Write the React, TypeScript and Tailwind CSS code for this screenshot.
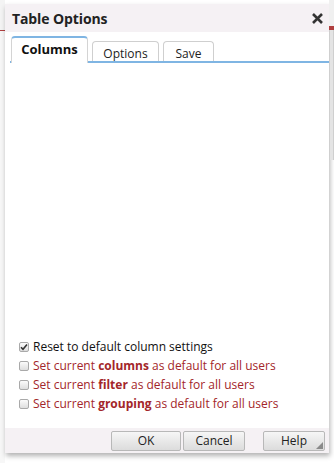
import React from "react";

const rows = [
  { checked: true, pre: "Reset to default column settings", bold: "", post: "", red: false },
  { checked: false, pre: "Set current ", bold: "columns", post: " as default for all users", red: true },
  { checked: false, pre: "Set current ", bold: "filter", post: " as default for all users", red: true },
  { checked: false, pre: "Set current ", bold: "grouping", post: " as default for all users", red: true },
];

function Box({ checked }: { checked: boolean }) {
  return (
    <span className="w-[10px] h-[10px] rounded-[2px] border border-[#a9a9a9] bg-gradient-to-b from-[#fbfbfb] to-[#dedede] flex items-center justify-center shrink-0">
      {checked && (
        <svg width="8" height="8" viewBox="0 0 8 8">
          <path d="M1 4.2 L3 6.3 L7 1.5" stroke="#333" strokeWidth="1.6" fill="none" />
        </svg>
      )}
    </span>
  );
}

function Btn({ label, w }: { label: string; w: string }) {
  return (
    <button
      className={`${w} h-[20px] border border-[#b8b8b8] rounded-[2px] bg-gradient-to-b from-[#f6f6f6] to-[#dcdcdc] text-[12px] text-[#222] leading-none`}
    >
      {label}
    </button>
  );
}

export default function App() {
  return (
    <div className="w-[334px] h-[463px] bg-white flex overflow-hidden font-['Open_Sans',sans-serif]">
      <div className="w-[5px] shrink-0 flex flex-col">
        <div className="h-[30px] bg-[#f4f4f4]" />
        <div className="h-px bg-[#b04040]" />
        <div className="flex-1 bg-[#f7f7f7]" />
      </div>
      <div className="w-[324px] h-[449px] mt-[4px] bg-white flex flex-col shadow-[1px_3px_5px_rgba(0,0,0,0.3)] shrink-0">
        <div className="h-[28px] bg-[#f5f1f4] flex items-center justify-between pl-[7px] pr-[5px]">
          <span className="text-[14px] font-bold text-[#222] tracking-[-0.1px]">Table Options</span>
          <svg width="13" height="13" viewBox="0 0 13 13">
            <path d="M2 2 L11 11 M11 2 L2 11" stroke="#333" strokeWidth="2.6" />
          </svg>
        </div>
        <div className="flex-1 flex flex-col">
          <div className="pt-[4px] pl-[5px]">
            <div className="flex items-end gap-[4px] pl-[1px] border-b-2 border-[#7fb5e3]">
              <div className="w-[77px] h-[27px] border border-b-0 border-[#d4d4d4] border-t-2 border-t-[#7fb5e3] rounded-t-[4px] bg-white flex items-center justify-center text-[13px] font-bold text-[#111] -mb-[2px] pb-[1px]">
                Columns
              </div>
              <div className="w-[67px] h-[20px] border border-b-0 border-[#cfcfcf] rounded-t-[4px] bg-white flex items-center justify-center text-[12px] text-[#222] pt-[5px]">
                Options
              </div>
              <div className="w-[51px] h-[20px] border border-b-0 border-[#cfcfcf] rounded-t-[4px] bg-white flex items-center justify-center text-[12px] text-[#222] pt-[5px]">
                Save
              </div>
            </div>
          </div>
          <div className="flex-1 flex flex-col justify-end pb-[15px] pl-[14px]">
            {rows.map((r, i) => (
              <div key={i} className="h-[19px] flex items-center gap-[4px]">
                <Box checked={r.checked} />
                <span className={`text-[12px] ${r.red ? "text-[#a3262a]" : "text-[#111]"}`}>
                  {r.pre}
                  {r.bold && <b>{r.bold}</b>}
                  {r.post}
                </span>
              </div>
            ))}
          </div>
        </div>
        <div className="h-[25px] bg-[#f5f1f4] flex items-center pl-[106px] pr-[4px]">
          <Btn label="OK" w="w-[70px]" />
          <div className="w-[2px]" />
          <Btn label="Cancel" w="w-[62px]" />
          <div className="flex-1" />
          <div className="relative flex">
            <Btn label="Help" w="w-[62px]" />
            <svg className="absolute right-[2px] bottom-[2px]" width="7" height="7" viewBox="0 0 7 7">
              <path d="M7 0 L7 7 L0 7 Z" fill="#8a8a8a" />
            </svg>
          </div>
        </div>
      </div>
      <div className="w-[5px] shrink-0 flex flex-col">
        <div className="h-[26px] bg-[#f0f0f0]" />
        <div className="h-[4px] bg-[#b04040]" />
        <div className="h-[130px] bg-[#e4e4e4] border-x border-[#cfcfcf]" />
        <div className="flex-1" />
      </div>
    </div>
  );
}
